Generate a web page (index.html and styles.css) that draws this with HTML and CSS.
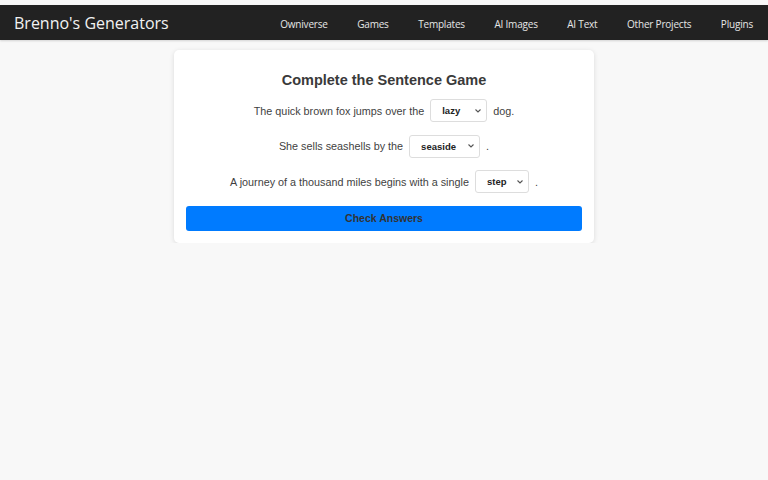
FILE: index.html
```html
<!DOCTYPE html>
<html lang="en">

<head>
    <meta charset="UTF-8">
    <meta name="viewport" content="width=device-width, initial-scale=1.0">
    <title>Complete the Sentence Game</title>
    <link rel="stylesheet" href="styles.css">
</head>

<body>
<nav class="navbar">
    <a class="brand" href="#">Brenno's Generators</a>
    <ul class="nav-links">
        <li><a href="#">Owniverse</a></li>
        <li><a href="#">Games</a></li>
        <li><a href="#">Templates</a></li>
        <li><a href="#">AI Images</a></li>
        <li><a href="#">AI Text</a></li>
        <li><a href="#">Other Projects</a></li>
        <li><a href="#">Plugins</a></li>
    </ul>
</nav>

<div class="container">
    <div class="game-card">
        <h2>Complete the Sentence Game</h2>

        <p class="sentence">The quick brown fox jumps over the
            <select class="word lazy">
                <option>lazy</option>
                <option>happy</option>
                <option>sleepy</option>
            </select>
            dog.
        </p>

        <p class="sentence">She sells seashells by the
            <select class="word seaside">
                <option>seaside</option>
                <option>river</option>
                <option>market</option>
            </select>
            .
        </p>

        <p class="sentence">A journey of a thousand miles begins with a single
            <select class="word step">
                <option>step</option>
                <option>leap</option>
                <option>jump</option>
            </select>
            .
        </p>

        <button type="button" id="checkBtn">Check Answers</button>
    </div>
</div>
</body>

</html>
```

FILE: styles.css
```css
/* Layout chung */
body {
    font-family: "Liberation Sans", Arial, sans-serif;
    background-color: #f8f8f8;
    margin: 0;
    padding: 5px 0 0;
    color: #333;
}

.navbar {
    background-color: #222;
    height: 35px;
    display: flex;
    align-items: center;
    justify-content: space-between;
    padding: 0 15px 0 14px;
    box-shadow: 0 1px 2px rgba(0, 0, 0, 0.15);
}

.brand {
    font-family: "Open Sans", sans-serif;
    font-size: 16px;
    color: #f2f2f2;
    text-decoration: none;
}

.nav-links {
    list-style: none;
    display: flex;
    margin: 0;
    padding: 0;
    gap: 29.5px;
}

.nav-links a {
    font-family: "Open Sans", sans-serif;
    font-size: 10px;
    color: #e6e6e6;
    text-decoration: none;
    letter-spacing: -0.2px;
}

.container {
    display: flex;
    justify-content: center;
    padding-top: 10px;
}

.game-card {
    background-color: #fff;
    width: 396px;
    padding: 22px 12px 12px;
    border-radius: 5px;
    box-shadow: 0 1px 5px rgba(0, 0, 0, 0.12);
    text-align: center;
}

h2 {
    font-size: 14.5px;
    margin: 0 0 11px;
    color: #3a3a3a;
}

.sentence {
    font-size: 10.8px;
    margin: 0 0 12.5px;
    color: #3f3f3f;
    display: flex;
    justify-content: center;
    align-items: center;
    gap: 6px;
}

/* select co mui ten nho thay vi mac dinh */
.word {
    appearance: none;
    -webkit-appearance: none;
    font-family: "Liberation Sans", Arial, sans-serif;
    font-weight: bold;
    font-size: 9.5px;
    height: 23px;
    padding: 0 14px 0 11px;
    border: 1px solid #ddd;
    border-radius: 3px;
    background-color: #fff;
    background-image: url("data:image/svg+xml,%3Csvg xmlns='http://www.w3.org/2000/svg' width='6' height='4' viewBox='0 0 6 4'%3E%3Cpath d='M0.5 0.5L3 3L5.5 0.5' fill='none' stroke='%23555' stroke-width='1.1'/%3E%3C/svg%3E");
    background-repeat: no-repeat;
    background-position: right 5px center;
    color: #222;
    text-align: left;
}

.lazy {
    width: 57px;
}

.seaside {
    width: 71px;
}

.step {
    width: 54px;
}

button {
    width: 100%;
    height: 25px;
    margin-top: 0;
    border: none;
    border-radius: 3px;
    background-color: #007bff;
    color: #333;
    font-family: "Liberation Sans", Arial, sans-serif;
    font-weight: bold;
    font-size: 10.5px;
    cursor: pointer;
}

button:hover {
    background-color: #0069d9;
}
```
